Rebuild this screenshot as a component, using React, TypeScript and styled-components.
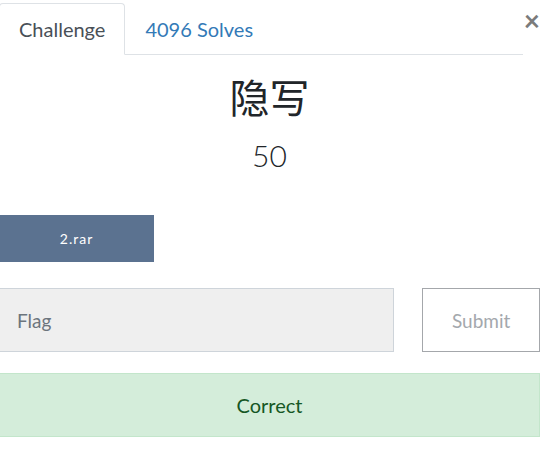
import React from "react";
import styled, { createGlobalStyle } from "styled-components";

const GlobalStyle = createGlobalStyle`
  html, body {
    margin: 0;
    padding: 0;
    background: #ffffff;
    overflow: hidden;
  }
  body {
    font-family: "Lato", "Noto Sans CJK SC", sans-serif;
    color: #212529;
  }
`;

const Page = styled.div`
  width: 541px;
  margin-left: -1px;
  box-sizing: border-box;
`;

const Header = styled.div`
  display: flex;
  align-items: flex-start;
  padding-top: 3px;
`;

const Nav = styled.ul`
  flex: 1;
  display: flex;
  list-style: none;
  margin: 0;
  padding: 0;
  border-bottom: 1px solid #dee2e6;
`;

const Tab = styled.li<{ $active?: boolean }>`
  margin-bottom: -1px;
  padding: 10px 19px;
  font-size: 20px;
  line-height: 30px;
  border: 1px solid ${(p) => (p.$active ? "#dee2e6" : "transparent")};
  border-bottom-color: ${(p) => (p.$active ? "#ffffff" : "transparent")};
  border-radius: 4px 4px 0 0;
  background: ${(p) => (p.$active ? "#ffffff" : "transparent")};
  color: ${(p) => (p.$active ? "#495057" : "#337ab7")};
  cursor: pointer;
`;

const Close = styled.button`
  width: 17px;
  padding: 0;
  margin-top: 2px;
  border: none;
  background: none;
  font-family: "Lato", sans-serif;
  font-size: 28px;
  font-weight: 700;
  line-height: 30px;
  color: #7b7b7b;
  text-align: right;
  cursor: pointer;
`;

const Heading = styled.div`
  text-align: center;
  padding-top: 19px;
`;

const Name = styled.h2`
  margin: 0;
  font-family: "Lato", "Noto Sans CJK SC", sans-serif;
  font-size: 40px;
  font-weight: 400;
  line-height: 48px;
  color: #212529;
`;

const Value = styled.h3`
  margin: 16px 0 0;
  font-size: 30px;
  font-weight: 300;
  line-height: 35px;
  color: #212529;
`;

const FileButton = styled.button`
  display: block;
  width: 155px;
  height: 47px;
  margin-top: 42px;
  border: none;
  border-radius: 0;
  background: #5b7290;
  color: #ffffff;
  font-family: "Lato", sans-serif;
  font-size: 14px;
  letter-spacing: 1px;
  cursor: pointer;
`;

const SubmitRow = styled.div`
  display: flex;
  gap: 28px;
  margin-top: 26px;
`;

const FlagInput = styled.input`
  width: 396px;
  height: 64px;
  box-sizing: border-box;
  padding: 0 16px 0 17px;
  border: 1px solid #ced4da;
  border-radius: 0;
  background: #efefef;
  font-family: "Lato", sans-serif;
  font-size: 19px;
  color: #495057;
  outline: none;

  &::placeholder {
    color: #6c757d;
    opacity: 1;
  }
`;

const SubmitButton = styled.button`
  width: 118px;
  height: 64px;
  box-sizing: border-box;
  border: 1px solid #a4a7ab;
  border-radius: 0;
  background: #ffffff;
  font-family: "Lato", sans-serif;
  font-size: 19px;
  color: #a4a8ad;
  cursor: pointer;
`;

const Alert = styled.div`
  margin-top: 21px;
  height: 64px;
  box-sizing: border-box;
  display: flex;
  align-items: center;
  justify-content: center;
  border: 1px solid #c3e6cb;
  background: #d4edda;
  color: #155724;
  font-size: 20px;
`;

export default function App() {
  return (
    <>
      <GlobalStyle />
      <Page>
        <Header>
          <Nav>
            <Tab $active>Challenge</Tab>
            <Tab>4096 Solves</Tab>
          </Nav>
          <Close aria-label="Close">×</Close>
        </Header>

        <Heading>
          <Name>隐写</Name>
          <Value>50</Value>
        </Heading>

        <FileButton>2.rar</FileButton>

        <SubmitRow>
          <FlagInput placeholder="Flag" />
          <SubmitButton>Submit</SubmitButton>
        </SubmitRow>

        <Alert>Correct</Alert>
      </Page>
    </>
  );
}
